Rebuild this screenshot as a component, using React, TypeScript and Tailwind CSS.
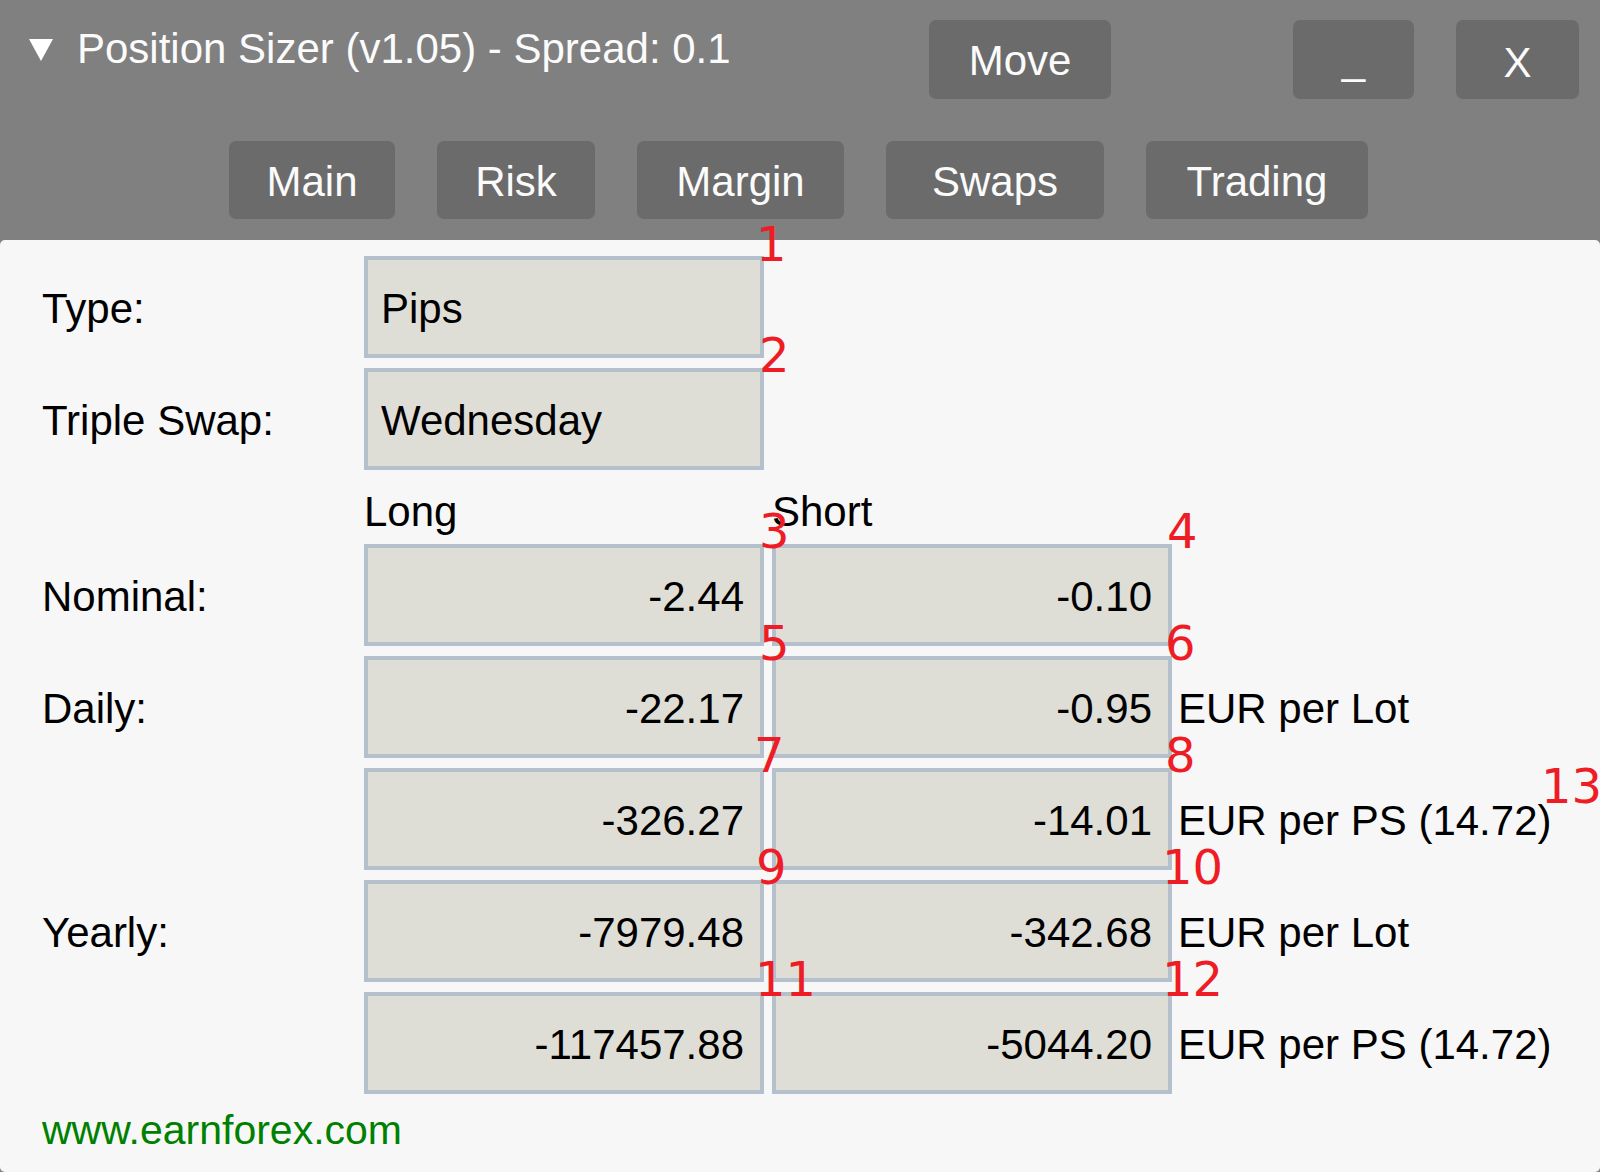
import React from 'react';

const rows = [
  { label: 'Nominal:', long: '-2.44', short: '-0.10', unit: '' },
  { label: 'Daily:', long: '-22.17', short: '-0.95', unit: 'EUR per Lot' },
  { label: '', long: '-326.27', short: '-14.01', unit: 'EUR per PS (14.72)' },
  { label: 'Yearly:', long: '-7979.48', short: '-342.68', unit: 'EUR per Lot' },
  { label: '', long: '-117457.88', short: '-5044.20', unit: 'EUR per PS (14.72)' },
];

const tabs = [
  { name: 'Main', w: 'w-[166px]' },
  { name: 'Risk', w: 'w-[158px]' },
  { name: 'Margin', w: 'w-[207px]' },
  { name: 'Swaps', w: 'w-[218px]' },
  { name: 'Trading', w: 'w-[222px]' },
];

// red callout numbers: x = left, b = baseline (page coords)
const marks = [
  { t: '1', x: 756, b: 261 },
  { t: '2', x: 759, b: 372 },
  { t: '3', x: 759, b: 548 },
  { t: '4', x: 1167, b: 548 },
  { t: '5', x: 759, b: 660 },
  { t: '6', x: 1165, b: 660 },
  { t: '7', x: 754, b: 772 },
  { t: '8', x: 1165, b: 772 },
  { t: '9', x: 756, b: 884 },
  { t: '10', x: 1162, b: 884 },
  { t: '11', x: 755, b: 996 },
  { t: '12', x: 1162, b: 996 },
  { t: '13', x: 1541, b: 803 },
];

function Field({ children, right }: { children: React.ReactNode; right?: boolean }) {
  return (
    <div
      className={`h-full w-[400px] border-4 border-[#b4c1cc] bg-[#dfded6] flex items-center leading-none pt-[4px] ${
        right ? 'justify-end pr-[16px]' : 'pl-[13px]'
      }`}
    >
      {children}
    </div>
  );
}

export default function App() {
  return (
    <div className="relative min-h-screen flex flex-col bg-[#808080] font-['Liberation_Sans',Arial,sans-serif] text-[42px] leading-none">
      {/* Title bar */}
      <div className="flex items-start pt-[20px] pl-[29px] pr-[21px]">
        <svg width="24" height="22" viewBox="0 0 24 22" className="mt-[19px] shrink-0">
          <polygon points="0,0 24,0 12,22" fill="#ffffff" />
        </svg>
        <span className="ml-[24px] mt-[8px] text-[#fbfbfb] whitespace-nowrap">
          Position Sizer (v1.05) - Spread: 0.1
        </span>
        <button className="ml-auto h-[79px] w-[182px] rounded-[7px] bg-[#6b6b6b] text-[#fbfbfb] flex items-center justify-center pt-[3px]">
          Move
        </button>
        <button className="ml-[182px] h-[79px] w-[121px] rounded-[7px] bg-[#6b6b6b] text-[#fbfbfb] flex items-center justify-center">
          _
        </button>
        <button className="ml-[42px] h-[79px] w-[123px] rounded-[7px] bg-[#6b6b6b] text-[#fbfbfb] flex items-center justify-center pt-[6px]">
          X
        </button>
      </div>

      {/* Tabs */}
      <div className="flex gap-[42px] pl-[229px] mt-[42px] mb-[21px]">
        {tabs.map((t) => (
          <button
            key={t.name}
            className={`${t.w} h-[78px] rounded-[7px] bg-[#6b6b6b] text-[#fbfbfb] flex items-center justify-center pt-[4px]`}
          >
            {t.name}
          </button>
        ))}
      </div>

      {/* Body */}
      <div className="flex-1 rounded-[5px] bg-[#f7f7f7] pt-[16px] pl-[42px] text-black">
        <div className="flex flex-col gap-[10px]">
          <div className="flex items-center h-[102px]">
            <div className="w-[322px] pt-[4px]">Type:</div>
            <Field>Pips</Field>
          </div>
          <div className="flex items-center h-[102px]">
            <div className="w-[322px] pt-[4px]">Triple Swap:</div>
            <Field>Wednesday</Field>
          </div>
          <div className="flex h-[54px] pt-[11px]">
            <div className="w-[322px]" />
            <div className="w-[408px]">Long</div>
            <div>Short</div>
          </div>
          {rows.map((r, i) => (
            <div key={i} className="flex items-center h-[102px]">
              <div className="w-[322px] pt-[4px]">{r.label}</div>
              <Field right>{r.long}</Field>
              <div className="w-[8px]" />
              <Field right>{r.short}</Field>
              <div className="ml-[6px] pt-[4px] whitespace-nowrap">{r.unit}</div>
            </div>
          ))}
        </div>
        <div className="mt-[16px] text-[41px] text-[#008000]">www.earnforex.com</div>
      </div>

      {/* Callout numbers over the panel */}
      {marks.map((m) => (
        <span
          key={m.t}
          className="absolute font-['DejaVu_Sans',sans-serif] text-[48px] leading-none text-[#ee1c25]"
          style={{ left: m.x, top: m.b - 41 }}
        >
          {m.t}
        </span>
      ))}
    </div>
  );
}
